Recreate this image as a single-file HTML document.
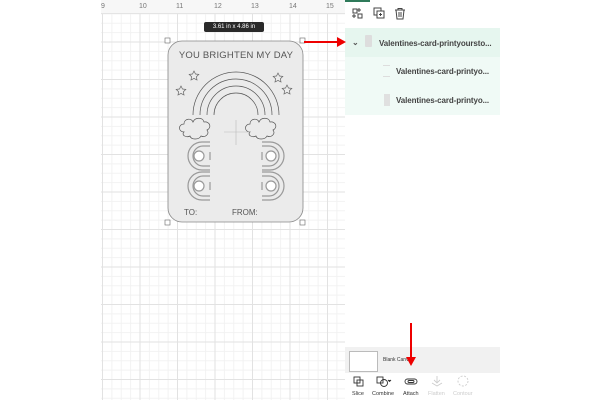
<!DOCTYPE html>
<html><head><style>
body{margin:0;width:600px;height:400px;background:#fff;position:relative;overflow:hidden;font-family:"Liberation Sans",sans-serif}
.canvas{position:absolute;left:101px;top:0;width:244px;height:400px;
background-color:#fff;
background-image:linear-gradient(#e2e2e2 1px,transparent 1px),linear-gradient(90deg,#e2e2e2 1px,transparent 1px),linear-gradient(#f2f2f2 1px,transparent 1px),linear-gradient(90deg,#f2f2f2 1px,transparent 1px);
background-size:37.5px 37.5px,37.5px 37.5px,9.375px 9.375px,9.375px 9.375px;background-position:1px 4px,1px 4px,1px 4px,1px 4px}
.ruler{position:absolute;left:101px;top:0;width:244px;height:13px;background:#f7f7f7;border-bottom:1px solid #e4e4e4;font-size:7px;color:#777}
.ruler span{position:absolute;top:3px}
.panel{position:absolute;left:345px;top:0;width:155px;height:400px;background:#fff}
.row{position:absolute;left:0;font-size:8px;color:#444;font-weight:bold;letter-spacing:-0.1px}
</style></head><body>
<div class="canvas"></div>
<div class="ruler"><span style="left:0">9</span><span style="left:38px">10</span><span style="left:75px">11</span><span style="left:113px">12</span><span style="left:150px">13</span><span style="left:188px">14</span><span style="left:225px">15</span></div>
<div style="position:absolute;left:204px;top:22px;width:60px;height:10px;background:#2a2a2a;border-radius:2px;color:#fff;font-size:6px;line-height:10px;text-align:center">3.61 in x 4.86 in</div>
<svg style="position:absolute;left:0;top:0" width="600" height="400">
<rect x="168" y="41" width="135" height="181" rx="14" fill="#ebebeb" stroke="#888" stroke-width="0.8"/>
<g fill="#fff" stroke="#666" stroke-width="0.6"><rect x="165" y="38" width="5" height="5"/><rect x="300" y="38" width="5" height="5"/><rect x="165" y="220" width="5" height="5"/><rect x="300" y="220" width="5" height="5"/></g>
<text x="236" y="58" font-size="9.5" fill="#555" text-anchor="middle" letter-spacing="0.2">YOU BRIGHTEN MY DAY</text>
<g fill="none" stroke="#555" stroke-width="0.7">
<path d="M193 115 A43 43 0 0 1 279 115"/><path d="M200 115 A36 36 0 0 1 272 115"/><path d="M207 115 A29 29 0 0 1 265 115"/><path d="M214 115 A22 22 0 0 1 258 115"/>
<path d="M184 132 c-6 0 -6 -8 0 -8 c0 -6 8 -6 9 -2 c2 -5 10 -5 11 0 c6 -1 8 6 3 8 c3 4 -2 8 -6 6 c-2 4 -10 4 -11 0 c-4 2 -9 -1 -6 -4z" fill="#ebebeb"/>
<path d="M250 132 c-6 0 -6 -8 0 -8 c0 -6 8 -6 9 -2 c2 -5 10 -5 11 0 c6 -1 8 6 3 8 c3 4 -2 8 -6 6 c-2 4 -10 4 -11 0 c-4 2 -9 -1 -6 -4z" fill="#ebebeb"/>
</g>
<g fill="none" stroke="#666" stroke-width="0.7">
<path d="M194 71 l1.5 3 3.3 .4 -2.4 2.3 .6 3.3 -3 -1.6 -3 1.6 .6 -3.3 -2.4 -2.3 3.3 -.4z"/>
<path d="M181 86 l1.5 3 3.3 .4 -2.4 2.3 .6 3.3 -3 -1.6 -3 1.6 .6 -3.3 -2.4 -2.3 3.3 -.4z"/>
<path d="M278 73 l1.5 3 3.3 .4 -2.4 2.3 .6 3.3 -3 -1.6 -3 1.6 .6 -3.3 -2.4 -2.3 3.3 -.4z"/>
<path d="M287 85 l1.5 3 3.3 .4 -2.4 2.3 .6 3.3 -3 -1.6 -3 1.6 .6 -3.3 -2.4 -2.3 3.3 -.4z"/>
</g>
<g stroke="#bbb" stroke-width="0.6"><line x1="236" y1="120" x2="236" y2="145"/><line x1="224" y1="132" x2="250" y2="132"/></g>
<g fill="none" stroke="#999" stroke-width="1.2">
<path d="M210 142 h-8 a14 14 0 0 0 0 28 h8"/><path d="M210 146 h-7 a10 10 0 0 0 0 20 h7"/><circle cx="199" cy="156" r="5" fill="#fff"/><line x1="210" y1="152" x2="210" y2="160"/>
<path d="M210 172 h-8 a14 14 0 0 0 0 28 h8"/><path d="M210 176 h-7 a10 10 0 0 0 0 20 h7"/><circle cx="199" cy="186" r="5" fill="#fff"/><line x1="210" y1="182" x2="210" y2="190"/>
<path d="M262 142 h8 a14 14 0 0 1 0 28 h-8"/><path d="M262 146 h7 a10 10 0 0 1 0 20 h-7"/><circle cx="271" cy="156" r="5" fill="#fff"/><line x1="262" y1="152" x2="262" y2="160"/>
<path d="M262 172 h8 a14 14 0 0 1 0 28 h-8"/><path d="M262 176 h7 a10 10 0 0 1 0 20 h-7"/><circle cx="271" cy="186" r="5" fill="#fff"/><line x1="262" y1="182" x2="262" y2="190"/>
</g>
<text x="184" y="215" font-size="8" fill="#555">TO:</text>
<text x="232" y="215" font-size="8" fill="#555">FROM:</text>
</svg>
<div class="panel">
<div style="position:absolute;left:0;top:0;width:25px;height:2px;background:#2f7a5a"></div>
<svg style="position:absolute;left:6px;top:7px" width="60" height="14" fill="none" stroke="#444" stroke-width="1">
<rect x="2" y="2" width="4" height="4"/><rect x="7" y="7" width="4" height="4"/><path d="M1 9h4M3 7v4M8 1v4M6 3h4"/>
<rect x="23" y="1" width="7" height="7"/><rect x="26" y="4" width="7" height="7" fill="#fff"/><path d="M29.5 6v3M28 7.5h3"/>
<path d="M44 3h10M47 3v-1.5h4V3M45 3l1 9h6l1-9M48 5v5M50 5v5"/>
</svg>
<div style="position:absolute;left:0;top:28px;width:155px;height:87px;background:#f0faf6"></div>
<div style="position:absolute;left:0;top:28px;width:155px;height:29px;background:#e6f6ef"></div>
<div class="row" style="top:38px;left:7px;color:#555;font-size:8px">⌄</div>
<div style="position:absolute;left:20px;top:35px;width:7px;height:12px;background:#ddd;border-radius:1px"></div>
<div class="row" style="top:39px;left:34px">Valentines-card-printyoursto...</div>
<div style="position:absolute;left:38px;top:65px;width:7px;height:10px;border-top:1px solid #ddd;border-bottom:1px solid #ddd"></div>
<div class="row" style="top:67px;left:51px">Valentines-card-printyo...</div>
<div style="position:absolute;left:39px;top:94px;width:6px;height:12px;background:#e0e0e0"></div>
<div class="row" style="top:96px;left:51px">Valentines-card-printyo...</div>
<div style="position:absolute;left:0;top:347px;width:155px;height:26px;background:#f1f1f1"></div>
<div style="position:absolute;left:4px;top:351px;width:27px;height:19px;background:#fff;border:1px solid #bbb"></div>
<div style="position:absolute;left:38px;top:357px;font-size:5px;color:#333">Blank Canvas</div>
<svg style="position:absolute;left:0;top:374px" width="155" height="26" fill="none" stroke="#333" stroke-width="0.9">
<rect x="9" y="3" width="6" height="6"/><rect x="12" y="6" width="6" height="6"/>
<rect x="32" y="3" width="6" height="6"/><circle cx="39" cy="9" r="3.5"/><path d="M43 6l1.5 1.5 1.5-1.5" fill="#333"/>
<rect x="60" y="5" width="12" height="5" rx="2.5"/><rect x="63" y="6.5" width="6" height="2" rx="1"/>
<path d="M92 2v6M89 6l3 3 3-3M87 9l5 3 5-3" stroke="#ccc"/>
<circle cx="118" cy="7" r="5" stroke="#ccc" stroke-dasharray="2 1.5"/>
<g stroke="none" font-size="5.5" fill="#333"><text x="7" y="21">Slice</text><text x="27" y="21">Combine</text><text x="58" y="21">Attach</text><text x="83" y="21" fill="#ccc">Flatten</text><text x="108" y="21" fill="#ccc">Contour</text></g>
</svg>
</div>
<svg style="position:absolute;left:0;top:0" width="600" height="400">
<line x1="304" y1="42" x2="338" y2="42" stroke="#e00" stroke-width="2"/><path d="M346 42l-9-5v10z" fill="#e00"/>
<line x1="411" y1="323" x2="411" y2="358" stroke="#e00" stroke-width="2"/><path d="M411 366l-5-9h10z" fill="#e00"/>
</svg>
</body></html>
